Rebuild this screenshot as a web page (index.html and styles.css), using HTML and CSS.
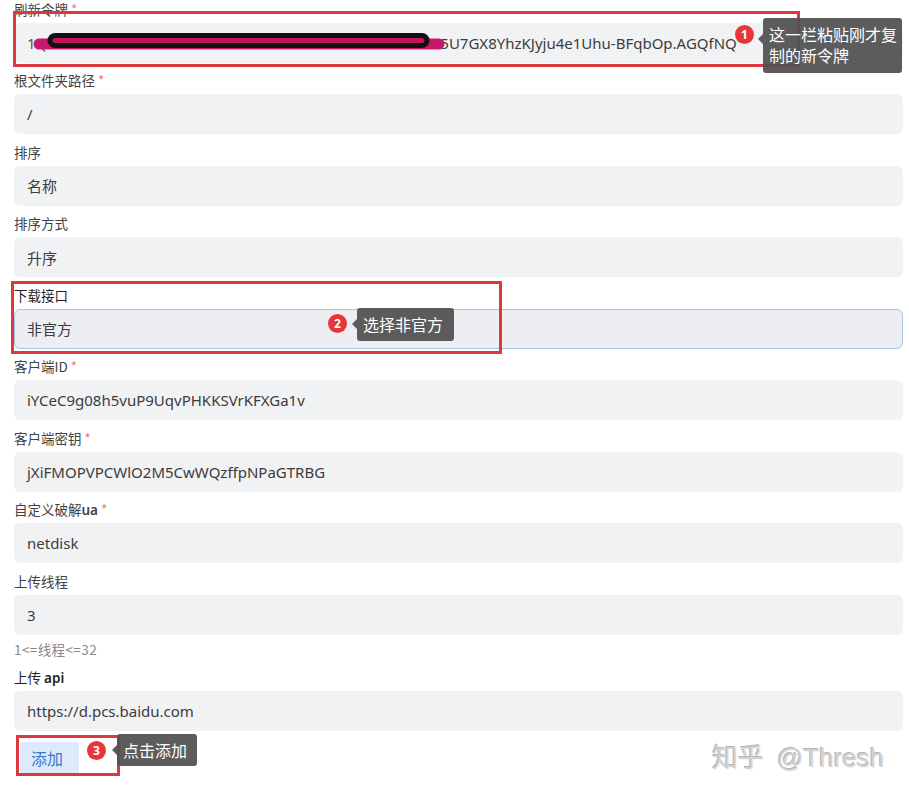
FILE: index.html
```html
<!DOCTYPE html>
<html lang="zh-CN">
<head>
<meta charset="utf-8">
<title>添加存储</title>
<link rel="stylesheet" href="styles.css">
</head>
<body>
<div class="page">
  <form class="form">
    <div class="field">
      <div class="label">刷新令牌 <span class="req">*</span></div>
      <div class="input"><span class="tok-head">1Q</span><span class="tok-mid"></span><span>5U7GX8YhzKJyju4e1Uhu-BFqbOp.AGQfNQ</span></div>
    </div>
    <div class="field">
      <div class="label">根文件夹路径 <span class="req">*</span></div>
      <div class="input">/</div>
    </div>
    <div class="field">
      <div class="label">排序</div>
      <div class="input">名称</div>
    </div>
    <div class="field">
      <div class="label">排序方式</div>
      <div class="input">升序</div>
    </div>
    <div class="field">
      <div class="label dark">下载接口</div>
      <div class="input focus">非官方</div>
    </div>
    <div class="field">
      <div class="label">客户端ID <span class="req">*</span></div>
      <div class="input">iYCeC9g08h5vuP9UqvPHKKSVrKFXGa1v</div>
    </div>
    <div class="field">
      <div class="label">客户端密钥 <span class="req">*</span></div>
      <div class="input">jXiFMOPVPCWlO2M5CwWQzffpNPaGTRBG</div>
    </div>
    <div class="field">
      <div class="label">自定义破解<b>ua</b> <span class="req">*</span></div>
      <div class="input">netdisk</div>
    </div>
    <div class="field">
      <div class="label">上传线程</div>
      <div class="input">3</div>
      <div class="help">1&lt;=线程&lt;=32</div>
    </div>
    <div class="field">
      <div class="label dark">上传 <b>api</b></div>
      <div class="input">https://d.pcs.baidu.com</div>
    </div>
    <button type="button" class="btn">添加</button>
  </form>

  <svg class="scribble" width="460" height="60" viewBox="0 0 460 60">
    <line x1="39" y1="45" x2="439" y2="45" stroke="#c8186a" stroke-width="11" stroke-linecap="round"/>
    <line x1="55" y1="41.5" x2="422" y2="41.5" stroke="#111" stroke-width="15" stroke-linecap="round"/>
    <line x1="55" y1="41.5" x2="422" y2="41.5" stroke="#c0155c" stroke-width="5" stroke-linecap="round"/>
  </svg>

  <div class="mark box1"></div>
  <div class="mark box2"></div>
  <div class="mark box3"></div>

  <div class="badge b1">1</div>
  <div class="badge b2">2</div>
  <div class="badge b3">3</div>

  <div class="tip t1">这一栏粘贴刚才复制的新令牌</div>
  <div class="tip t2">选择非官方</div>
  <div class="tip t3">点击添加</div>

  <div class="watermark">知乎<span class="wm-latin">@Thresh</span></div>
</div>
</body>
</html>
```

FILE: styles.css
```css
html, body {
  margin: 0;
  padding: 0;
  background: #ffffff;
}

body {
  font-family: "Noto Sans", "Noto Sans CJK SC", sans-serif;
  overflow: hidden;
}

.page {
  position: relative;
  width: 909px;
  height: 794px;
}

.form {
  display: flex;
  flex-direction: column;
  align-items: stretch;
  padding: 0 6px 0 14px;
  margin-top: -1.5px;
}

.field {
  display: flex;
  flex-direction: column;
  margin-bottom: 7.5px;
}

.label {
  font-family: "Noto Sans CJK SC", "Noto Sans", sans-serif;
  font-size: 13.5px;
  line-height: 20px;
  height: 20px;
  color: #434343;
  margin-bottom: 4px;
  white-space: nowrap;
}

.label b {
  font-weight: 600;
  font-family: "Noto Sans", "Noto Sans CJK SC", sans-serif;
}

.label.dark {
  color: #1f1f1f;
}

.req {
  color: #ef7474;
}

.input {
  box-sizing: border-box;
  height: 40px;
  display: flex;
  align-items: center;
  padding: 0 13px;
  background: #f1f2f4;
  border-radius: 6px;
  font-family: "Noto Sans", "Noto Sans CJK SC", sans-serif;
  font-size: 15px;
  color: #3c3c3c;
  white-space: nowrap;
  overflow: hidden;
}

.input.focus {
  background: #eceef1;
  border: 1px solid #a8c5e8;
  padding-left: 12px;
}

.tok-head {
  color: #555;
}

.tok-mid {
  display: inline-block;
  width: 393px;
}

.help {
  margin-top: 6px;
  font-family: "Noto Sans CJK SC", "Noto Sans", sans-serif;
  font-size: 13.5px;
  letter-spacing: 0.4px;
  line-height: 16px;
  height: 16px;
  color: #8a8a8a;
  margin-bottom: 2.5px;
}

.btn {
  align-self: flex-start;
  margin: 3.5px 0 0 6px;
  width: 59px;
  height: 32px;
  padding: 0 0 0 11px;
  text-align: left;
  border: none;
  border-radius: 0;
  background: #dceafb;
  color: #3e78c5;
  font-family: "Noto Sans CJK SC", sans-serif;
  font-size: 16px;
  line-height: 32px;
}

/* ---------- annotation overlay ---------- */

.scribble {
  position: absolute;
  left: 0;
  top: 0;
}

.mark {
  position: absolute;
  box-sizing: border-box;
  border: 3px solid #dc383d;
}

.box1 { left: 13px; top: 12px; width: 787px; height: 56px; }
.box2 { left: 11px; top: 282px; width: 491px; height: 73px; }
.box3 { left: 16px; top: 736px; width: 104px; height: 41px; }

.badge {
  position: absolute;
  width: 19px;
  height: 19px;
  border-radius: 50%;
  background: #e8353a;
  color: #fff;
  font-family: "Noto Sans", sans-serif;
  font-size: 12px;
  font-weight: 700;
  line-height: 19px;
  text-align: center;
}

.b1 { left: 735px; top: 26px; }
.b2 { left: 328px; top: 315px; }
.b3 { left: 87px; top: 742px; }

.tip {
  position: absolute;
  box-sizing: border-box;
  background: rgba(82, 82, 82, 0.94);
  color: #fff;
  font-family: "Noto Sans CJK SC", sans-serif;
  font-size: 16px;
  line-height: 21px;
  padding: 6px 11px 6px 6px;
  border-radius: 3px;
  white-space: nowrap;
}

.tip::before {
  content: "";
  position: absolute;
  left: -5px;
  top: 50%;
  margin-top: -5px;
  border-style: solid;
  border-width: 5px 5px 5px 0;
  border-color: transparent rgba(82, 82, 82, 0.94) transparent transparent;
}

.t1 {
  left: 763px;
  top: 19px;
  width: 139px;
  height: 55px;
  white-space: normal;
  padding: 6px 5px 6px 6px;
  line-height: 21.5px;
}

.t1::before {
  top: 16px;
  margin-top: 0;
}

.t2 { left: 357px; top: 309px; width: 97px; height: 33px; }
.t3 { left: 117px; top: 735px; width: 80px; height: 32px; }

.watermark {
  position: absolute;
  left: 712px;
  top: 740px;
  font-family: "Noto Sans CJK SC", sans-serif;
  font-size: 26px;
  line-height: 34px;
  color: #d2d2d2;
  text-shadow: -1px -1px 0 #b4b4b4, 1px 1px 0 #f6f6f6;
  white-space: nowrap;
}

.wm-latin {
  margin-left: 13px;
  font-family: "Liberation Sans", sans-serif;
}
```
